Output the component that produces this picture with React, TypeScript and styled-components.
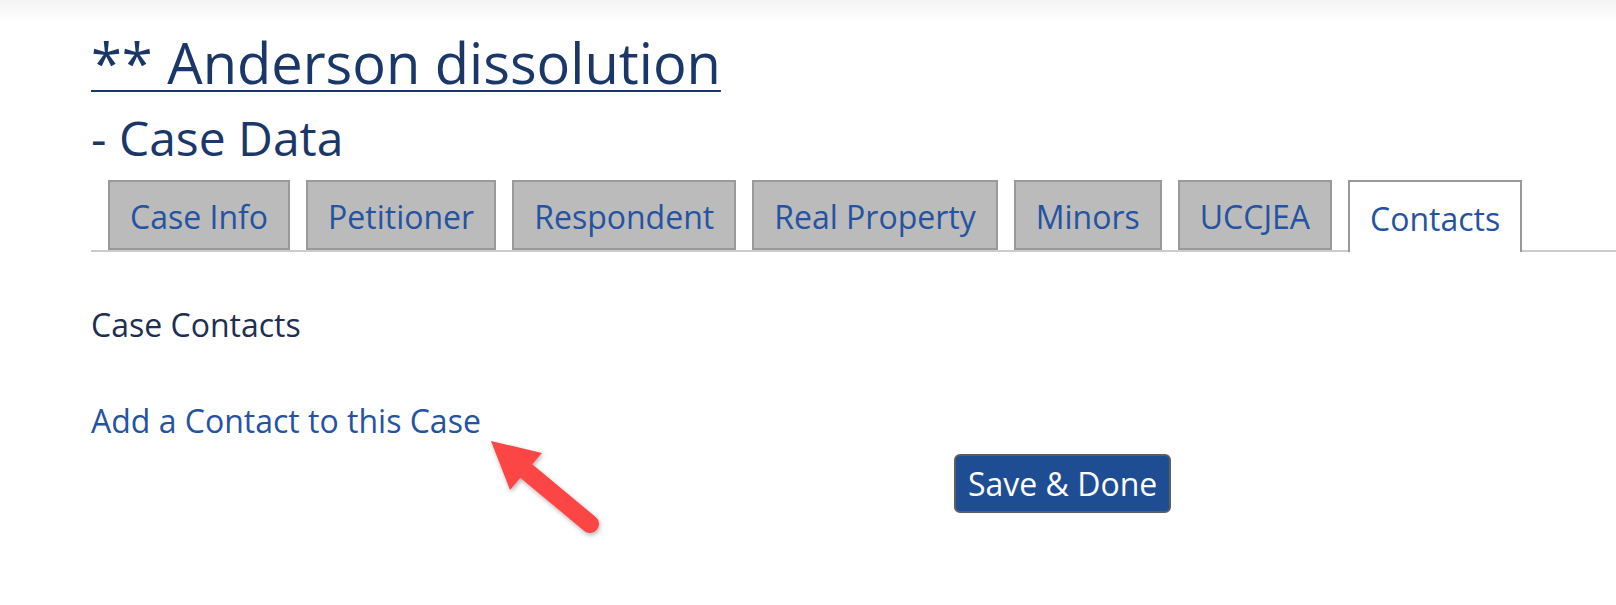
import { FC } from "react";
import styled, { createGlobalStyle } from "styled-components";

const GlobalStyle = createGlobalStyle`
  html, body {
    margin: 0;
    padding: 0;
    background: #ffffff;
    font-family: "Open Sans", "Noto Sans", sans-serif;
  }
`;

const tabs = ["Case Info", "Petitioner", "Respondent", "Real Property", "Minors", "UCCJEA", "Contacts"];

const App: FC = () => {
  return (
    <>
      <GlobalStyle />
      <Page>
        <TopShade />
        <Content>
          <Title href="#">** Anderson dissolution</Title>
          <SubTitle>- Case Data</SubTitle>
          <TabBar>
            {tabs.map((t) => (
              <Tab key={t} active={t === "Contacts"}>
                {t}
              </Tab>
            ))}
          </TabBar>
          <Panel>
            <SectionLabel>Case Contacts</SectionLabel>
            <AddLink href="#">Add a Contact to this Case</AddLink>
            <ButtonRow>
              <SaveButton>Save &amp; Done</SaveButton>
            </ButtonRow>
            <Arrow width="130" height="110" viewBox="0 0 130 110">
              <defs>
                <filter id="sh" x="-20%" y="-20%" width="140%" height="140%">
                  <feDropShadow dx="1" dy="2" stdDeviation="2" floodColor="#000" floodOpacity="0.3" />
                </filter>
              </defs>
              <g filter="url(#sh)">
                <line x1="105" y1="89" x2="40" y2="35" stroke="#fc4545" strokeWidth="18" strokeLinecap="round" />
                <polygon points="6,6 57,18 25,55" fill="#fc4545" />
              </g>
            </Arrow>
          </Panel>
        </Content>
      </Page>
    </>
  );
};

export default App;

const Page = styled.div`
  position: relative;
  width: 100%;
  height: 605px;
  overflow: hidden;
  background: #fff;
`;

const TopShade = styled.div`
  height: 22px;
  background: linear-gradient(#f3f3f3, #ffffff);
`;

const Content = styled.div`
  padding: 0 0 0 91px;
  display: flex;
  flex-direction: column;
`;

const Title = styled.a`
  align-self: flex-start;
  margin-top: 4px;
  font-size: 56px;
  line-height: 72px;
  color: #1a3768;
  text-decoration: underline;
  text-decoration-thickness: 2px;
  text-underline-offset: 6px;
`;

const SubTitle = styled.div`
  margin-top: 8px;
  font-size: 48px;
  line-height: 64px;
  color: #1a3768;
`;

const TabBar = styled.div`
  display: flex;
  gap: 16px;
  margin-top: 10px;
  padding-left: 17px;
  border-bottom: 2px solid #cccccc;
  height: 70px;
`;

const Tab = styled.div<{ active?: boolean }>`
  box-sizing: border-box;
  height: ${(p) => (p.active ? "72px" : "70px")};
  padding: 3px 20px 0;
  display: flex;
  align-items: center;
  font-size: 32px;
  color: #2553a0;
  background: ${(p) => (p.active ? "#ffffff" : "#bbbbbb")};
  border: 2px solid #999999;
  border-bottom: ${(p) => (p.active ? "none" : "2px solid #999999")};
`;

const Panel = styled.div`
  position: relative;
  display: flex;
  flex-direction: column;
  align-items: flex-start;
  padding-top: 51px;
`;

const SectionLabel = styled.div`
  font-size: 32px;
  line-height: 44px;
  color: #1e2f50;
`;

const AddLink = styled.a`
  margin-top: 52px;
  font-size: 32px;
  line-height: 44px;
  color: #2553a0;
  text-decoration: none;
`;

const ButtonRow = styled.div`
  margin-top: 11px;
  padding-left: 863px;
`;

const SaveButton = styled.button`
  box-sizing: border-box;
  height: 59px;
  padding: 0 12px;
  font-family: "Open Sans", "Noto Sans", sans-serif;
  font-size: 32px;
  color: #ffffff;
  background: #1f4d94;
  border: 2px solid #5e5e5e;
  border-radius: 6px;
`;

const Arrow = styled.svg`
  position: absolute;
  left: 394px;
  top: 183px;
  overflow: visible;
`;
